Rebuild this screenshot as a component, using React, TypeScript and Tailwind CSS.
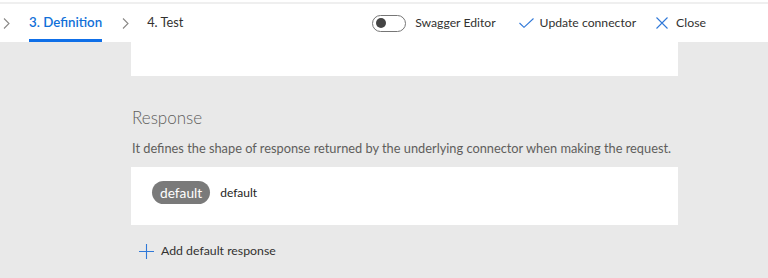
const font = { fontFamily: 'Lato, "Open Sans", sans-serif' };

function Chevron({ className }: { className?: string }) {
  return (
    <svg width="7" height="11" viewBox="0 0 7 11" className={className} fill="none">
      <path d="M1 0.5 L6 5.5 L1 10.5" stroke="#8a8886" strokeWidth="1.1" />
    </svg>
  );
}

export default function App() {
  return (
    <div
      className="w-[768px] h-[278px] bg-[#e9e9e9] overflow-hidden text-[#323130]"
      style={font}
    >
      {/* Header */}
      <header className="bg-white pt-[2px]">
        <div className="border-t-2 border-[#efefef] h-[40px] flex items-center">
          <Chevron className="ml-[3px]" />
          <div className="relative ml-[19px] h-full flex items-center">
            <span className="text-[13.3px] font-semibold text-[#1170d8]">3. Definition</span>
            <span className="absolute left-0 right-0 bottom-0 h-[3px] bg-[#0f6fe8]" />
          </div>
          <Chevron className="ml-[20px]" />
          <span className="ml-[18px] text-[12.8px]">4. Test</span>

          <div className="ml-auto mr-[62px] flex items-center">
            <div className="w-[34px] h-[17px] rounded-full border border-[#767676] bg-white flex items-center px-[3px]">
              <span className="w-[10px] h-[10px] rounded-full bg-[#444]" />
            </div>
            <span className="ml-[9px] text-[12.2px]">Swagger Editor</span>
            <svg width="15" height="10" viewBox="0 0 15 10" className="ml-[23px]" fill="none">
              <path d="M0.5 5 L5 9.3 L14.5 0.5" stroke="#2f78d8" strokeWidth="1.1" />
            </svg>
            <span className="ml-[6px] text-[12.2px]">Update connector</span>
            <svg width="12" height="12" viewBox="0 0 12 12" className="ml-[20px]" fill="none">
              <path d="M0.5 0.5 L11.5 11.5 M11.5 0.5 L0.5 11.5" stroke="#2f78d8" strokeWidth="1.1" />
            </svg>
            <span className="ml-[8px] text-[12.3px]">Close</span>
          </div>
        </div>
      </header>

      <main className="ml-[131px] w-[547px]">
        <div className="h-[34px] bg-white" />

        <h2 className="mt-[30px] pl-px text-[17px] font-light leading-[24px] text-[#605e5c]">
          Response
        </h2>
        <p className="mt-[10px] pl-px text-[12.8px] leading-[16px] text-[#605e5c]">
          It defines the shape of response returned by the underlying connector when making the request.
        </p>

        <div className="mt-[11px] h-[58px] bg-white pt-[14px] pl-[21px] flex items-start">
          <span className="h-[23px] px-[8px] rounded-full bg-[#7a7a7a] text-white text-[13.7px] leading-[23px]">
            default
          </span>
          <span className="ml-[10px] text-[12px] leading-[23px] text-[#252423]">default</span>
        </div>

        <div className="mt-[17px] ml-[8px] flex items-center">
          <svg width="15" height="15" viewBox="0 0 15 15" fill="none">
            <path d="M7.5 0 V15 M0 7.5 H15" stroke="#2f78d8" strokeWidth="1.1" />
          </svg>
          <span className="ml-[7px] text-[12.3px]">Add default response</span>
        </div>
      </main>
    </div>
  );
}
